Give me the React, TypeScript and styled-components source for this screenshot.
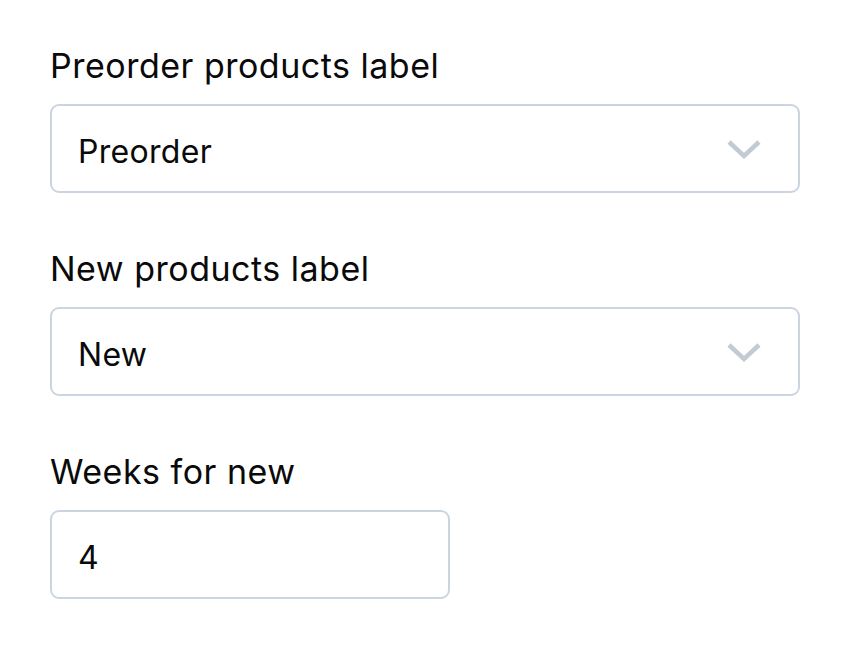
import React from "react";
import styled, { createGlobalStyle } from "styled-components";

const Global = createGlobalStyle`
  html, body { margin: 0; padding: 0; background: #ffffff; }
  body { font-family: Inter, "Noto Sans", Arial, sans-serif; color: #0a0a0a; }
`;

const Page = styled.div`
  padding: 45px 50px 0 50px;
  display: flex;
  flex-direction: column;
  gap: 55px;
`;

const Field = styled.div`
  display: flex;
  flex-direction: column;
  gap: 18px;
`;

const Label = styled.label`
  font-size: 34px;
  line-height: 41px;
  letter-spacing: 0.5px;
  font-weight: 400;
  color: #0a0a0a;
`;

const Box = styled.div<{ $width: number }>`
  box-sizing: border-box;
  width: ${(p) => p.$width}px;
  height: 89px;
  border: 2px solid #cbd5e1;
  border-radius: 9px;
  display: flex;
  align-items: center;
  justify-content: space-between;
  padding: 5px 36px 0 26px;
  font-size: 32px;
  letter-spacing: 0.3px;
  color: #0a0a0a;
  background: #fff;
`;

const Chevron = () => (
  <svg width="36" height="22" viewBox="0 0 36 22" fill="none" style={{ marginTop: -5 }}>
    <polyline points="3,4 18,18 33,4" stroke="#c3cad3" strokeWidth="4.5" strokeLinecap="butt" strokeLinejoin="miter" />
  </svg>
);

export default function App() {
  return (
    <>
      <Global />
      <Page>
        <Field>
          <Label>Preorder products label</Label>
          <Box $width={750}>
            <span>Preorder</span>
            <Chevron />
          </Box>
        </Field>
        <Field>
          <Label>New products label</Label>
          <Box $width={750}>
            <span>New</span>
            <Chevron />
          </Box>
        </Field>
        <Field>
          <Label>Weeks for new</Label>
          <Box $width={400}>
            <span>4</span>
          </Box>
        </Field>
      </Page>
    </>
  );
}
